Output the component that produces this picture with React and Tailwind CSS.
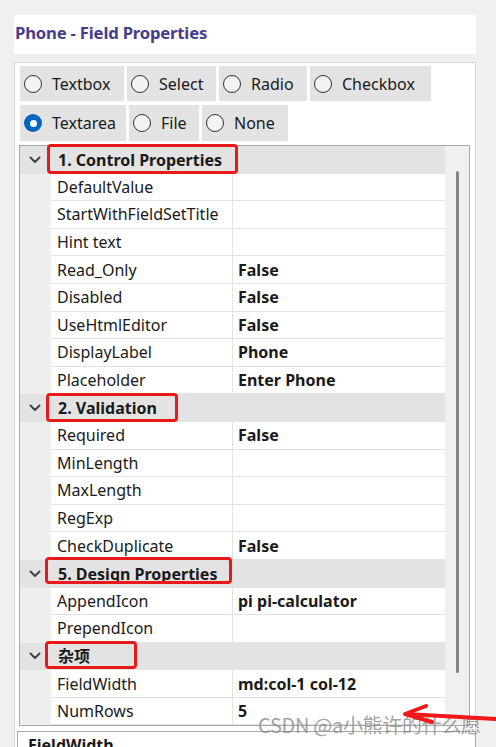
import React from 'react';

const rows = [
  { cat: '1. Control Properties', box: { top: -2, left: 27, width: 191, height: 30 } },
  { k: 'DefaultValue' },
  { k: 'StartWithFieldSetTitle' },
  { k: 'Hint text' },
  { k: 'Read_Only', v: 'False' },
  { k: 'Disabled', v: 'False' },
  { k: 'UseHtmlEditor', v: 'False' },
  { k: 'DisplayLabel', v: 'Phone' },
  { k: 'Placeholder', v: 'Enter Phone' },
  { cat: '2. Validation', box: { top: -1, left: 26, width: 132, height: 29 } },
  { k: 'Required', v: 'False' },
  { k: 'MinLength' },
  { k: 'MaxLength' },
  { k: 'RegExp' },
  { k: 'CheckDuplicate', v: 'False' },
  { cat: '5. Design Properties', box: { top: -3, left: 25, width: 187, height: 27 } },
  { k: 'AppendIcon', v: 'pi pi-calculator' },
  { k: 'PrependIcon' },
  { cat: '杂项', box: { top: -2, left: 25, width: 92, height: 28 } },
  { k: 'FieldWidth', v: 'md:col-1 col-12' },
  { k: 'NumRows', v: '5' },
];

const radios = [
  [
    { label: 'Textbox', w: 'w-[104px]' },
    { label: 'Select', w: 'w-[89px]' },
    { label: 'Radio', w: 'w-[88px]' },
    { label: 'Checkbox', w: 'w-[121px]' },
  ],
  [
    { label: 'Textarea', w: 'w-[106px]', on: true },
    { label: 'File', w: 'w-[70px]' },
    { label: 'None', w: 'w-[86px]' },
  ],
];

const Chevron = () => (
  <svg width="12" height="8" viewBox="0 0 12 8" fill="none">
    <path d="M1.5 1.5 L6 6 L10.5 1.5" stroke="#444" strokeWidth="2" strokeLinecap="round" strokeLinejoin="round" />
  </svg>
);

const RadioButton = ({ label, w, on }) => (
  <div className={`${w} h-full bg-[#e3e3e3] flex items-center pl-[4px] gap-[10px]`}>
    {on ? (
      <span className="w-[18px] h-[18px] rounded-full bg-[#0067c0] flex items-center justify-center">
        <span className="w-[7px] h-[7px] rounded-full bg-white" />
      </span>
    ) : (
      <span className="w-[18px] h-[18px] rounded-full border border-[#333] bg-[#f3f3f3]" />
    )}
    <span className="text-[16px] text-[#1a1a1a]">{label}</span>
  </div>
);

export default function App() {
  return (
    <div className="relative w-[496px] h-[747px] overflow-hidden bg-[#f0f0f0] font-['Noto_Sans','Noto_Sans_CJK_SC',sans-serif]">
      <div className="pt-[15px] pl-[14px] w-[476px]">
        <div className="h-[39px] bg-white flex items-center pl-[1px] pb-[3px]">
          <span className="text-[16.7px] font-bold text-[#483d8b] tracking-[-0.2px]">Phone - Field Properties</span>
        </div>

        <div className="mt-[8px] h-[700px] border border-[#dadada] bg-white pl-[4px] pr-[5px] pt-[3px]">
          <div className="flex flex-col gap-[4px] pl-[1px]">
            {radios.map((row, i) => (
              <div key={i} className={`flex gap-[3px] ${i === 0 ? 'h-[35px]' : 'h-[36px]'}`}>
                {row.map((r) => (
                  <RadioButton key={r.label} {...r} />
                ))}
              </div>
            ))}
          </div>

          <div className="mt-[4px] flex border border-[#a8a8a8] bg-white">
            <div className="w-[425px]">
              {rows.map((r, i) =>
                r.cat ? (
                  <div key={i} className="relative flex h-[27.6px] bg-[#e3e3e3]">
                    <div className="w-[31px] flex items-center justify-center pr-[2px]">
                      <Chevron />
                    </div>
                    <div className="pl-[7px] flex items-center text-[16px] font-bold text-[#1a1a1a] whitespace-nowrap">{r.cat}</div>
                    <span
                      className="absolute border-[3px] border-[#e8191a] rounded-[4px]"
                      style={{ top: r.box.top, left: r.box.left, width: r.box.width, height: r.box.height }}
                    />
                  </div>
                ) : (
                  <div key={i} className="flex h-[27.6px]">
                    <div className="w-[31px] bg-[#efefef]" />
                    <div className="w-[182px] border-r border-b border-[#e3e3e3] pl-[6px] flex items-center text-[16px] text-[#1a1a1a] whitespace-nowrap">
                      {r.k}
                    </div>
                    <div className="flex-1 border-b border-[#e3e3e3] pl-[5px] flex items-center text-[16px] font-bold text-[#1a1a1a] whitespace-nowrap">
                      {r.v}
                    </div>
                  </div>
                )
              )}
            </div>
            <div className="flex-1 bg-[#f0f0f0] flex justify-center pt-[25px] pb-[52px]">
              <div className="w-[3px] rounded-full bg-[#858585]" />
            </div>
          </div>
        </div>
      </div>

      <div className="absolute left-[17px] top-[731px] w-[459px] h-[30px] border border-[#a8a8a8] bg-white pl-[10px] pt-[1px]">
        <span className="text-[16px] font-bold text-[#1a1a1a]">FieldWidth</span>
      </div>

      <span className="absolute left-[258px] top-[710px] text-[20px] text-[#8a8a8a]/80 font-['Noto_Sans_CJK_SC',sans-serif] tracking-[-0.3px]">
        CSDN @a小熊许的什么愿
      </span>

      <svg className="absolute left-0 top-0" width="496" height="747" viewBox="0 0 496 747">
        <path d="M406 714 L496 719" stroke="#f01818" strokeWidth="4" strokeLinecap="round" fill="none" />
        <path d="M426 706 L405 714 L432 722" stroke="#f01818" strokeWidth="4" strokeLinecap="round" strokeLinejoin="round" fill="none" />
      </svg>
    </div>
  );
}
